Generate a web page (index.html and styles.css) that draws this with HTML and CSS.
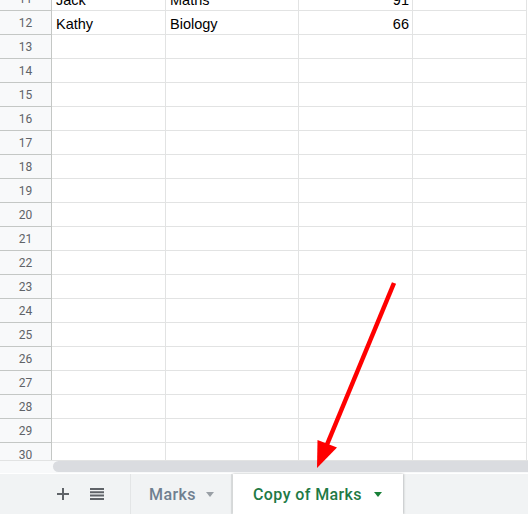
FILE: index.html
```html
<!DOCTYPE html>
<html>
<head>
<meta charset="utf-8">
<link rel="stylesheet" href="styles.css">
</head>
<body>
<div class="app">
  <div class="sheet">
    <div class="grid">
      <div class="row"><div class="rh">11</div><div class="c ca">Jack</div><div class="c cb">Maths</div><div class="c cc num">91</div><div class="c cd"></div></div>
      <div class="row"><div class="rh">12</div><div class="c ca">Kathy</div><div class="c cb">Biology</div><div class="c cc num">66</div><div class="c cd"></div></div>
      <div class="row"><div class="rh">13</div><div class="c ca"></div><div class="c cb"></div><div class="c cc"></div><div class="c cd"></div></div>
      <div class="row"><div class="rh">14</div><div class="c ca"></div><div class="c cb"></div><div class="c cc"></div><div class="c cd"></div></div>
      <div class="row"><div class="rh">15</div><div class="c ca"></div><div class="c cb"></div><div class="c cc"></div><div class="c cd"></div></div>
      <div class="row"><div class="rh">16</div><div class="c ca"></div><div class="c cb"></div><div class="c cc"></div><div class="c cd"></div></div>
      <div class="row"><div class="rh">17</div><div class="c ca"></div><div class="c cb"></div><div class="c cc"></div><div class="c cd"></div></div>
      <div class="row"><div class="rh">18</div><div class="c ca"></div><div class="c cb"></div><div class="c cc"></div><div class="c cd"></div></div>
      <div class="row"><div class="rh">19</div><div class="c ca"></div><div class="c cb"></div><div class="c cc"></div><div class="c cd"></div></div>
      <div class="row"><div class="rh">20</div><div class="c ca"></div><div class="c cb"></div><div class="c cc"></div><div class="c cd"></div></div>
      <div class="row"><div class="rh">21</div><div class="c ca"></div><div class="c cb"></div><div class="c cc"></div><div class="c cd"></div></div>
      <div class="row"><div class="rh">22</div><div class="c ca"></div><div class="c cb"></div><div class="c cc"></div><div class="c cd"></div></div>
      <div class="row"><div class="rh">23</div><div class="c ca"></div><div class="c cb"></div><div class="c cc"></div><div class="c cd"></div></div>
      <div class="row"><div class="rh">24</div><div class="c ca"></div><div class="c cb"></div><div class="c cc"></div><div class="c cd"></div></div>
      <div class="row"><div class="rh">25</div><div class="c ca"></div><div class="c cb"></div><div class="c cc"></div><div class="c cd"></div></div>
      <div class="row"><div class="rh">26</div><div class="c ca"></div><div class="c cb"></div><div class="c cc"></div><div class="c cd"></div></div>
      <div class="row"><div class="rh">27</div><div class="c ca"></div><div class="c cb"></div><div class="c cc"></div><div class="c cd"></div></div>
      <div class="row"><div class="rh">28</div><div class="c ca"></div><div class="c cb"></div><div class="c cc"></div><div class="c cd"></div></div>
      <div class="row"><div class="rh">29</div><div class="c ca"></div><div class="c cb"></div><div class="c cc"></div><div class="c cd"></div></div>
      <div class="row"><div class="rh">30</div><div class="c ca"></div><div class="c cb"></div><div class="c cc"></div><div class="c cd"></div></div>
    </div>
  </div>
  <div class="hscroll"><div class="corner"></div><div class="thumb"></div></div>
  <div class="tabbar">
    <div class="tools">
      <button class="tool" aria-label="Add sheet">
        <svg width="12" height="12" viewBox="0 0 12 12"><path d="M5 0h2v5h5v2H7v5H5V7H0V5h5z" fill="#5f6368"/></svg>
      </button>
      <button class="tool" aria-label="All sheets">
        <svg width="14" height="12" viewBox="0 0 14 12"><path d="M0 0h14v2H0zM0 3.3h14v2H0zM0 6.6h14v2H0zM0 10h14v2H0z" fill="#5f6368"/></svg>
      </button>
    </div>
    <div class="tab">
      <span class="label">Marks</span>
      <span class="caret"></span>
    </div>
    <div class="tab active">
      <span class="label">Copy of Marks</span>
      <span class="caret"></span>
    </div>
  </div>
  <svg class="arrow" width="528" height="514" viewBox="0 0 528 514">
    <line x1="394" y1="283" x2="326" y2="447" stroke="#ff0000" stroke-width="4.5"/>
    <polygon points="317,468 317.5,440 337,447.5" fill="#ff0000"/>
  </svg>
</div>
</body>
</html>
```

FILE: styles.css
```css
* { box-sizing: border-box; }
html, body { margin: 0; padding: 0; }
body { width: 528px; height: 514px; overflow: hidden; background: #fff; font-family: Arial, "Liberation Sans", sans-serif; }
.app { position: relative; width: 528px; height: 514px; display: flex; flex-direction: column; }
.sheet { height: 460px; overflow: hidden; flex: none; }
.grid { margin-top: -13px; display: flex; flex-direction: column; }
.row { display: flex; height: 24px; flex: none; }
.rh {
  width: 52px; flex: none; background: #f8f9fa;
  border-right: 1px solid #c4c7c5; border-bottom: 1px solid #c4c7c5;
  font-family: Roboto, "Liberation Sans", sans-serif; font-size: 12px; color: #5f6368;
  display: flex; align-items: center; justify-content: center; padding-top: 1px;
}
.c {
  flex: none; border-right: 1px solid #e2e3e3; border-bottom: 1px solid #e2e3e3;
  font-family: "Liberation Sans", Arial, sans-serif; font-size: 14.5px; color: #000;
  display: flex; align-items: center; padding: 3px 3px 0 4px; white-space: nowrap; overflow: hidden;
}
.ca { width: 114px; }
.cb { width: 133px; }
.cc { width: 114px; }
.cd { width: 114px; }
.num { justify-content: flex-end; }
.hscroll { height: 13px; flex: none; display: flex; border-top: 1px solid #e2e3e3; background: #f8f9fa; }
.corner { width: 53px; flex: none; }
.thumb { flex: 1; background: #dadce0; border-radius: 6px 0 0 6px; margin: 0 0 1px 0; }
.tabbar { flex: 1; background: #f1f3f4; display: flex; align-items: stretch; border-top: 1px solid #fff; }
.tools { display: flex; align-items: center; padding-left: 51px; width: 131px; flex: none; border-right: 1px solid #e3e5e6; }
.tool { background: none; border: 0; padding: 0; width: 24px; height: 24px; display: flex; align-items: center; justify-content: center; margin-right: 10px; }
.tab {
  display: flex; align-items: center; padding: 1px 16px 0 18px; height: 100%;
  font-family: Roboto, "Liberation Sans", sans-serif; font-size: 16px; font-weight: 500; letter-spacing: 0.4px;
  color: #6f7f90; border-right: 1px solid #e3e5e6; width: 101px; flex: none;
}
.tab .label { padding-bottom: 1px; }
.caret { width: 0; height: 0; border-left: 4.5px solid transparent; border-right: 4.5px solid transparent; border-top: 5px solid #9aa0a6; margin-left: 10px; }
.tab.active {
  width: 170px; background: #fff; color: #1e7a45; margin-left: 1px; padding-left: 20px;
  box-shadow: -1px 0 2px rgba(60,64,67,0.2), 1px 0 2px rgba(60,64,67,0.25); border-right: 0;
}
.tab.active .caret { border-top-color: #188038; margin-left: 12px; }
.arrow { position: absolute; left: 0; top: 0; pointer-events: none; }
```
